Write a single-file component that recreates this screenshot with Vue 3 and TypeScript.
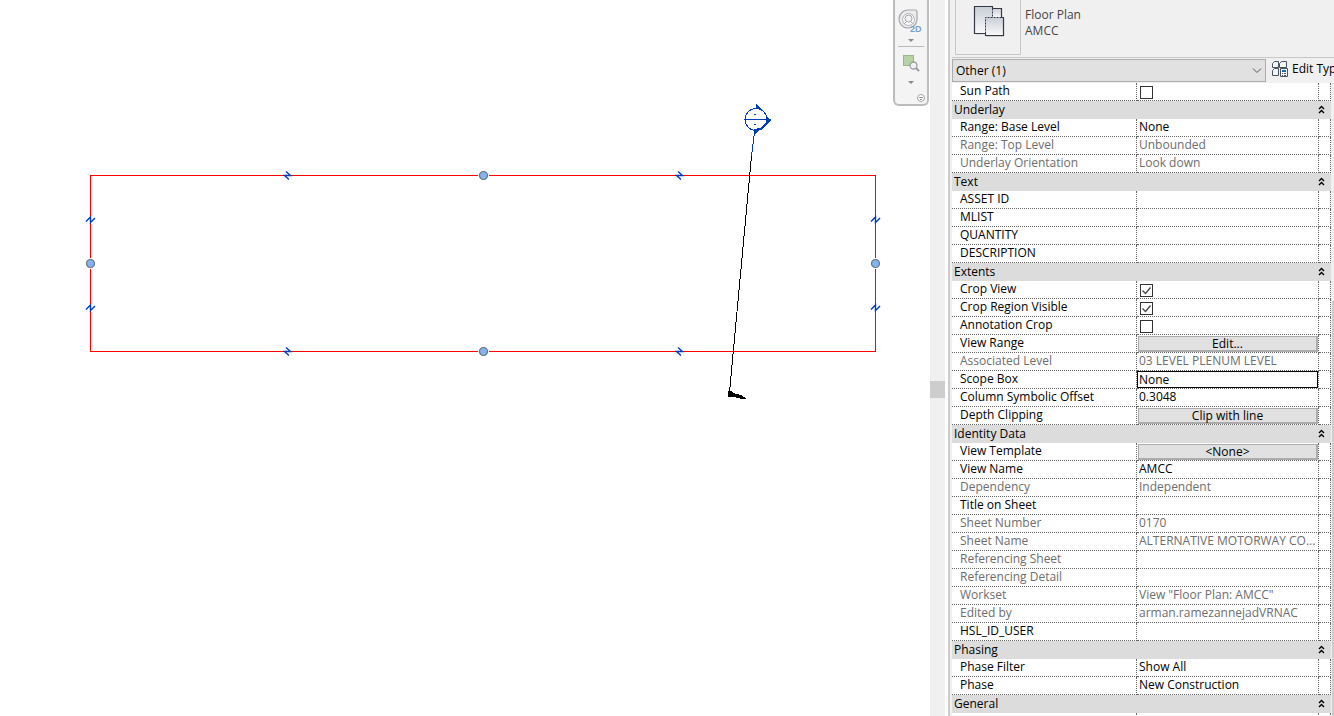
<script setup lang="ts">
import { reactive } from 'vue'

type Kind = 'text' | 'readonly' | 'check' | 'button' | 'focus'
interface Row { id: string; name: string; kind: Kind; value: string; checked: boolean }
interface Group { title: string; rows: Row[] }

let count = 0
function row(name: string, value = '', kind: Kind = 'text', checked = false): Row {
  count += 1
  return { id: `prop-${count}`, name, kind, value, checked }
}

const groups = reactive<Group[]>([
  { title: '', rows: [row('Sun Path', '', 'check')] },
  {
    title: 'Underlay',
    rows: [
      row('Range: Base Level', 'None'),
      row('Range: Top Level', 'Unbounded', 'readonly'),
      row('Underlay Orientation', 'Look down', 'readonly'),
    ],
  },
  { title: 'Text', rows: [row('ASSET ID'), row('MLIST'), row('QUANTITY'), row('DESCRIPTION')] },
  {
    title: 'Extents',
    rows: [
      row('Crop View', '', 'check', true),
      row('Crop Region Visible', '', 'check', true),
      row('Annotation Crop', '', 'check'),
      row('View Range', 'Edit...', 'button'),
      row('Associated Level', '03 LEVEL PLENUM LEVEL', 'readonly'),
      row('Scope Box', 'None', 'focus'),
      row('Column Symbolic Offset', '0.3048'),
      row('Depth Clipping', 'Clip with line', 'button'),
    ],
  },
  {
    title: 'Identity Data',
    rows: [
      row('View Template', '<None>', 'button'),
      row('View Name', 'AMCC'),
      row('Dependency', 'Independent', 'readonly'),
      row('Title on Sheet'),
      row('Sheet Number', '0170', 'readonly'),
      row('Sheet Name', 'ALTERNATIVE MOTORWAY CO...', 'readonly'),
      row('Referencing Sheet', '', 'readonly'),
      row('Referencing Detail', '', 'readonly'),
      row('Workset', 'View "Floor Plan: AMCC"', 'readonly'),
      row('Edited by', 'arman.ramezannejadVRNAC', 'readonly'),
      row('HSL_ID_USER'),
    ],
  },
  { title: 'Phasing', rows: [row('Phase Filter', 'Show All'), row('Phase', 'New Construction')] },
  { title: 'General', rows: [row('')] },
])

const horizontalBreaks = [[287, 175], [679, 175], [287, 351], [679, 351]]
const verticalBreaks = [[90, 219], [90, 307], [875, 219], [875, 307]]
const grips = [[483, 175], [483, 351], [90, 263], [875, 263]]
</script>

<template>
  <div class="window">
    <main class="canvas">
      <svg class="drawing" aria-label="Crop region">
        <rect class="crop" x="90.5" y="175.5" width="785" height="176" />
        <path class="cut" d="M754.5 132L751.5 156" stroke="#003cbe" />
        <path class="cut" d="M751.5 156L729.5 392" stroke="#000" />
        <path d="M728 391h3l2 2 8 2 6 4h-5l-8-2h-6z" fill="#000" shape-rendering="crispEdges" />
        <circle cx="756" cy="119.5" r="11" fill="#fff" stroke="#003cbe" shape-rendering="crispEdges" />
        <path
          d="M756 104l5 5 10 12-10 8-6 5-1-5 6-1 6-6 1-3-2-6-5-4-4-1z"
          fill="#003cbe" shape-rendering="crispEdges"
        />
        <path class="cut" d="M744 119.5H771M754 114.5h2M754 124.5h2" stroke="#003cbe" />
        <g v-for="[x, y] in horizontalBreaks" :key="`h${x}-${y}`" :transform="`translate(${x} ${y})`">
          <path class="gap" d="M-2 0.5H3" />
          <path class="break" d="M-1-3.5L3.5.5H-2.5L2 4.5" />
        </g>
        <g v-for="[x, y] in verticalBreaks" :key="`v${x}-${y}`" :transform="`translate(${x} ${y})`">
          <path class="gap" d="M.5-2V3" />
          <path class="break" d="M-4 2.5L.5-2V3.5L5-1" />
        </g>
        <g v-for="[x, y] in grips" :key="`g${x}-${y}`" :transform="`translate(${x} ${y})`">
          <rect x="-5" y="-5" width="11" height="11" fill="#fff" />
          <circle cx=".5" cy=".5" r="4" fill="#82b4f5" stroke="#697582" stroke-width="1.2" />
        </g>
      </svg>

      <nav class="navbar" aria-label="Navigation bar">
        <button type="button" aria-label="2D steering wheel">
          <svg width="28" height="28" viewBox="0 0 28 28">
            <path d="M11.500 2H18a2 2 0 0 1 2 2V12A9 9 0 1 1 11.500 2Z" fill="#ececee" stroke="#a4a5aa" stroke-width="1.2" />
            <circle cx="11.500" cy="11.500" r="6" fill="#f7f7f7" stroke="#b4b5ba" />
            <circle cx="11.500" cy="10.500" r="3.500" fill="#f2f2f2" stroke="#a4a5aa" />
            <path d="M7 16l2.500-2.500M16 16l-2.500-2.500" stroke="#a4a5aa" />
            <text x="13" y="24" class="two-d">2D</text>
          </svg>
        </button>
        <button type="button" class="drop" aria-label="Wheel options">
          <svg width="6" height="4"><path d="M0 0h6L3 3z" fill="#888" /></svg>
        </button>
        <hr>
        <button type="button" class="zoom" aria-label="Zoom region">
          <svg width="18" height="18">
            <rect x="1.5" y="1.5" width="10" height="10" fill="#b7d3a4" stroke="#93b984" />
            <circle cx="11.500" cy="11.500" r="3.5" fill="#eef2f6" stroke="#9b9da1" stroke-width="1.3" />
            <path d="M14 14l3 3" stroke="#999" stroke-width="2" />
          </svg>
        </button>
        <button type="button" class="drop" aria-label="Zoom options">
          <svg width="6" height="4"><path d="M0 0h6L3 3z" fill="#888" /></svg>
        </button>
        <button type="button" class="custom" aria-label="Customize">
          <svg width="8" height="8">
            <circle cx="4" cy="4" r="3.5" fill="#fff" stroke="#a4a4a4" />
            <path d="M2 3.5h4M3 5.5h2" stroke="#999" />
          </svg>
        </button>
      </nav>
    </main>

    <div class="view-scroll"><div class="view-thumb" /></div>

    <aside class="panel">
      <header class="type">
        <div class="thumb">
          <svg width="34" height="34" viewBox="0 0 34 34">
            <defs>
              <linearGradient id="sheet" x2="0" y2="1">
                <stop offset="0" stop-color="#c9cdd6" /><stop offset="1" stop-color="#fafafa" />
              </linearGradient>
            </defs>
            <path d="M4 30h7M14 32.5h18" stroke="#ccc" />
            <path d="M20.5 4.5h9v9h-9z" fill="url(#sheet)" />
            <path d="M2.5 2.5h18v11h-7v16h-11z" fill="url(#sheet)" />
            <path d="M13.5 13.5h18v18h-18z" fill="url(#sheet)" />
            <path
              d="M13.5 29.5h-11v-27h18v2h9v9h2v18h-18z"
              fill="none" stroke="#f0f0f0" stroke-width="0"
            />
            <path
              d="M13.5 29.5h-11v-27h18v2M20.5 4.5h9v9M29.5 13.5h2v18h-18v-2"
              fill="none" stroke="#343944" stroke-width="1.2"
            />
            <path d="M20.5 4.5v9M29.5 13.5h-16v16" fill="none" stroke="#343944" stroke-dasharray="2 1" />
          </svg>
        </div>
        <div class="type-name"><div>Floor Plan</div><div>AMCC</div></div>
      </header>

      <div class="filter">
        <select aria-label="Element filter"><option>Other (1)</option></select>
        <svg class="arrow" width="10" height="6"><path d="M1 .5l4 4 4-4" fill="none" stroke="#555" /></svg>
        <button type="button" class="edit-type">
          <svg width="18" height="18" viewBox="0 0 18 18">
            <g fill="#f3f6f8" stroke="#4b545e">
              <path d="M1.5 3.5l2-2h4v6h-6zM8.5 3.5l2-2h5v6h-7zM1.5 10.5l2-2h4v7h-6z" />
              <path d="M9.5 8.5h7v8h-7z" />
            </g>
            <path d="M11 10h4v2h-4z" fill="#1769b5" />
            <path d="M11 13.5h1M13 13.500h2M11 15.5h1M13 15.5h2" stroke="#4b545e" />
          </svg>
          <span>Edit Type</span>
        </button>
      </div>

      <div class="body">
        <table>
          <colgroup><col class="c-name"><col><col class="c-link"></colgroup>
          <tbody v-for="group in groups" :key="group.title">
            <tr v-if="group.title" class="group">
              <th colspan="3" scope="rowgroup">
                <div>
                  <span>{{ group.title }}</span>
                  <button type="button" :aria-label="`Collapse ${group.title}`">
                    <svg width="7" height="10">
                      <path d="M1 4l2.500-2.500L6 4M1 8l2.500-2.500L6 8" fill="none" stroke="#000" stroke-width="1.4" />
                    </svg>
                  </button>
                </div>
              </th>
            </tr>
            <tr v-for="r in group.rows" :key="r.id" :class="r.kind">
              <td class="name"><label :for="r.id">{{ r.name }}</label></td>
              <td class="value">
                <input v-if="r.kind === 'check'" :id="r.id" v-model="r.checked" type="checkbox">
                <button v-else-if="r.kind === 'button'" :id="r.id" type="button">{{ r.value }}</button>
                <input v-else :id="r.id" v-model="r.value" type="text" :readonly="r.kind === 'readonly'">
              </td>
              <td />
            </tr>
          </tbody>
        </table>
        <div class="panel-scroll" />
      </div>
    </aside>
  </div>
</template>

<style>
body {
  overflow: hidden;
  background: #fff;
}
</style>

<style scoped>
.window {
  display: grid;
  grid-template-columns: minmax(0, 1fr) 15px 389px;
  height: 100vh;
  overflow: hidden;
  font: 12px/16px "Open Sans", "Noto Sans", sans-serif;
  color: #000;
}
.window * { box-sizing: border-box; }
button, input, select { font: inherit; color: inherit; margin: 0; }
button { padding: 0; border: 0; background: none; }
svg { display: block; }
.canvas { position: relative; overflow: hidden; }
.drawing { width: 100%; height: 100%; }
.crop { fill: none; stroke: #f00; shape-rendering: crispEdges; }
.cut { fill: none; shape-rendering: crispEdges; }
.gap { stroke: #fff; }
.break { fill: none; stroke: #003cbe; stroke-width: 1.4; }
.navbar {
  position: absolute;
  top: 0;
  right: 1px;
  width: 36px;
  height: 106px;
  display: flex;
  flex-direction: column;
  align-items: center;
  padding-top: 8px;
  border: 2px solid #bcbcbc;
  border-top: 0;
  border-radius: 0 0 6px 6px;
  background: #f4f4f4;
}
.two-d { font: bold 9px "Liberation Sans", sans-serif; fill: #799fca; }
.drop { margin-top: 3px; height: 4px; }
.navbar hr { width: 26px; height: 1px; margin: 3px 0 7px; border: 0; background: #bbb; }
.zoom + .drop { margin-top: 9px; }
.custom { align-self: flex-end; margin: 9px 2px 0 0; }
.view-scroll { background: #f0f0f0; padding-top: 381px; }
.view-thumb { height: 17px; background: #cdcdcd; }
.panel {
  display: flex;
  flex-direction: column;
  min-height: 0;
  margin-left: 3px;
  padding-left: 2px;
  border-left: 2px solid #ccc;
  background: #f0f0f0;
  overflow: hidden;
}
.type { display: flex; flex: none; height: 58px; padding-left: 3px; border-bottom: 1px solid #c8c8c8; }
.thumb {
  width: 66px;
  height: 55px;
  padding: 4px 0 0 16px;
  border: 1px solid #c8c8c8;
  border-top: 0;
}
.type-name { padding: 7px 0 0 4px; color: #444; }
.filter { position: relative; display: flex; flex: none; height: 25px; padding-top: 1px; }
.filter select {
  width: 314px;
  height: 23px;
  padding: 0 3px;
  flex: none;
  appearance: none;
  border: 1px solid #adadad;
  border-radius: 0;
  background: #e1e1e1;
}
.arrow { position: absolute; left: 300px; top: 10px; pointer-events: none; }
.edit-type { display: flex; align-items: center; gap: 3px; height: 20px; margin-left: 5px; white-space: nowrap; }
.body { display: flex; flex: 1; min-height: 0; }
table { width: 379px; flex: none; align-self: flex-start; table-layout: fixed; border-collapse: separate; border-spacing: 0; background: #fff; }
.c-name { width: 185px; }
.c-link { width: 12px; }
tr { height: 18px; }
td {
  height: 18px;
  padding: 0;
  vertical-align: top;
  border-right: 1px dotted #666;
  border-bottom: 1px dotted #666;
}
.name { padding-left: 8px; white-space: nowrap; }
.name label { display: block; height: 17px; }
.readonly { color: #6d6d6d; }
th { padding: 0 6px 0 2px; height: 18px; font-weight: normal; background: #dcdcdc; text-align: left; }
th div { display: flex; justify-content: space-between; align-items: center; height: 18px; line-height: 18px; }
.value input[type="text"] {
  display: block;
  width: 100%;
  height: 16px;
  padding: 0 2px;
  border: 0;
  outline: 0;
  background: transparent;
}
.focus .value input[type="text"] { width: 181px; height: 17px; padding: 0 1px; border: 1px solid #000; }
.value input[type="checkbox"] {
  display: block;
  appearance: none;
  width: 13px;
  height: 13px;
  margin: 3px 0 0 3px;
  border: 1px solid #333;
  background: #fff;
}
.value input[type="checkbox"]:checked {
  background: url("data:image/svg+xml,%3Csvg xmlns='http://www.w3.org/2000/svg' width='11' height='11'%3E%3Cpath d='M1.5 5.5l3 3 5-6' fill='none' stroke='%23444' stroke-width='1.3'/%3E%3C/svg%3E");
}
.value button {
  display: block;
  width: 180px;
  height: 16px;
  margin: 1px 0 0 1px;
  line-height: 13px;
  border: 1px solid #acacac;
  border-right-width: 2px;
  border-bottom-width: 2px;
  background: #e1e1e1;
}
.panel-scroll { flex: 1; margin: 218px 0 0 1px; background: #cdcdcd; }
</style>
